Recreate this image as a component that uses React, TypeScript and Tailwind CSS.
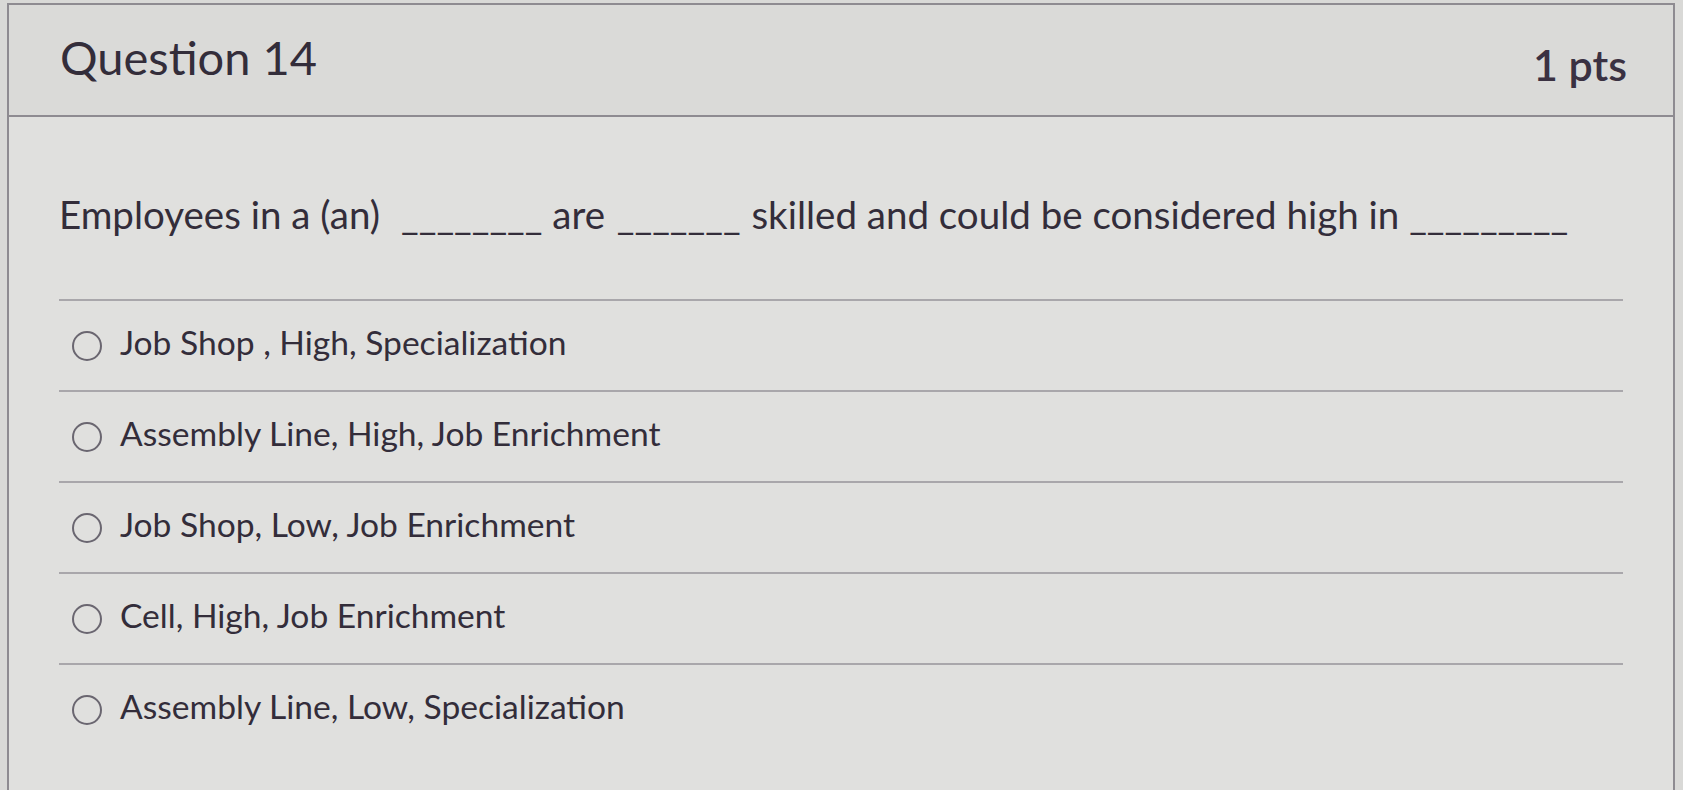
import React from "react";

const options = [
  "Job Shop , High, Specialization",
  "Assembly Line, High, Job Enrichment",
  "Job Shop, Low, Job Enrichment",
  "Cell, High, Job Enrichment",
  "Assembly Line, Low, Specialization",
];

export default function App() {
  return (
    <div
      className="h-[790px] w-full overflow-hidden bg-[#d9d9d7] pl-[7px] pt-[3px] text-[#332d3a]"
      style={{ fontFamily: "Lato, 'Open Sans', sans-serif" }}
    >
      <div className="h-[820px] w-[1668px] border-2 border-[#8e8b91] bg-[#e0e0de]">
        <div className="flex h-[112px] items-start justify-between border-b-2 border-[#8e8b91] bg-[#dadad8] pl-[51px] pr-[46px]">
          <h2 className="pt-[24px] text-[47px] leading-[56px] font-normal">Question 14</h2>
          <div className="pt-[34px] text-[43px] leading-[52px] font-semibold text-[#3a3142]">1 pts</div>
        </div>
        <div className="pl-[50px] pr-[50px]">
          <p className="pt-[74px] pb-[61px] text-[38.5px] leading-[47px]">
            Employees in a (an)<span className="ml-[21px]">________</span> are{" "}
            <span className="ml-[2px]">_______</span>
            <span className="ml-[1px]"> skilled and could be considered high in</span>
            <span> _________</span>
          </p>
          <div>
            {options.map((o) => (
              <label
                key={o}
                className="flex h-[91px] items-center border-t-2 border-[#a9a7ab]"
              >
                <span className="ml-[13px] mr-[18px] h-[30px] w-[30px] shrink-0 rounded-full border-2 border-[#6a6670]" />
                <span className="-mt-[6px] text-[33.6px] leading-[41px]">{o}</span>
              </label>
            ))}
          </div>
        </div>
      </div>
    </div>
  );
}
